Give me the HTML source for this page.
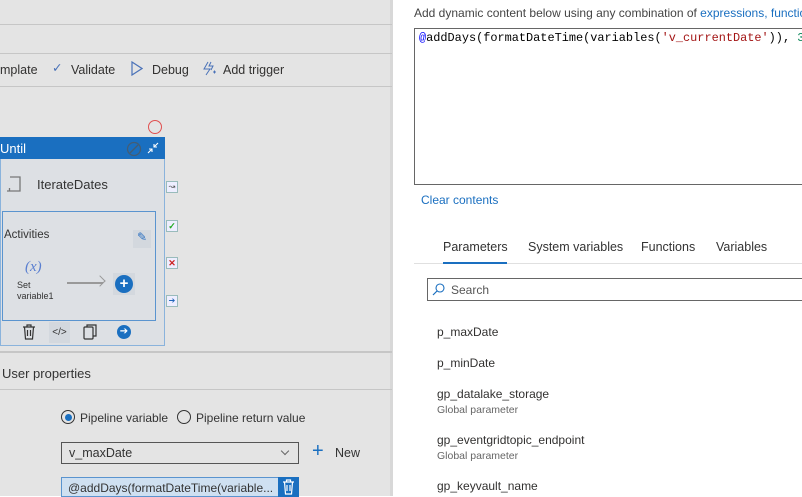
<!DOCTYPE html>
<html><head><style>
*{margin:0;padding:0;box-sizing:border-box}
body{width:802px;height:496px;overflow:hidden;background:#fff;font-family:"Liberation Sans",sans-serif;position:relative;color:#323130}
.a{position:absolute}
.l{background:#e4e4e4}
.hl{position:absolute;left:0;width:392px;height:1px;background:#c6c6c6}
.t{font-size:12.5px;white-space:nowrap}
</style></head><body>
<div class="a l" style="left:0;top:0;width:392px;height:496px"></div>
<div class="a" style="left:390px;top:0;width:3px;height:496px;background:#d8d8d8"></div>
<div class="hl" style="top:24px"></div>
<div class="hl" style="top:53px"></div>
<div class="hl" style="top:86px"></div>
<div class="a t" style="left:0;top:63px;color:#323130">mplate</div>
<div class="a t" style="left:52px;top:60px;color:#4a72b8">✓</div>
<div class="a t" style="left:71px;top:63px">Validate</div>
<svg class="a" style="left:131px;top:61px" width="12" height="15"><path d="M1 1 L11 7.5 L1 14 Z" fill="none" stroke="#4a72b8" stroke-width="1.2"/></svg>
<div class="a t" style="left:152px;top:63px">Debug</div>
<svg class="a" style="left:202px;top:61px" width="14" height="15"><path d="M6 1 L2 8 L8 8 L4 14 M9 1 L7 5 L11 5 L9 9 M11 11 h3 M12.5 9.5 v3" fill="none" stroke="#4a72b8" stroke-width="1"/></svg>
<div class="a t" style="left:223px;top:63px">Add trigger</div>

<div class="a" style="left:148px;top:120px;width:14px;height:14px;border:1.3px solid #e05050;border-radius:50%"></div>
<div class="a" style="left:0;top:137px;width:165px;height:209px;background:#dde0e4;border:1px solid #8ab3dc"></div>
<div class="a" style="left:0;top:137px;width:165px;height:22px;background:#1a6fc0"></div>
<div class="a" style="left:0;top:141px;font-size:13px;color:#fff">Until</div>
<svg class="a" style="left:126px;top:141px" width="16" height="16"><circle cx="8" cy="8" r="6.5" fill="none" stroke="#555" stroke-width="1.3" opacity=".7"/><path d="M4 12 L12 4" stroke="#555" stroke-width="1.3" opacity=".7"/></svg>
<svg class="a" style="left:146px;top:141px" width="14" height="14"><path d="M2 12 L6 8 M3 8 H6 V11 M12 2 L8 6 M8 3 V6 H11" fill="none" stroke="#fff" stroke-width="1.1"/></svg>
<svg class="a" style="left:6px;top:176px" width="16" height="17"><path d="M4 1 H14 V15 H5 M1 15 H6 M3.5 12 V15" fill="none" stroke="#777" stroke-width="1.3"/></svg>
<div class="a" style="left:37px;top:177px;font-size:13px;color:#333">IterateDates</div>
<div class="a" style="left:2px;top:211px;width:154px;height:110px;border:1px solid #5a94cf"></div>
<div class="a" style="left:4px;top:229px;font-size:11.5px;color:#333">Activities</div>
<div class="a" style="left:133px;top:230px;width:18px;height:18px;background:#d3d8de;color:#2a6fc0;font-size:12px;text-align:center">✎</div>
<div class="a" style="left:25px;top:259px;font-size:15px;color:#5a7fd0;font-family:'Liberation Serif',serif;font-style:italic">(x)</div>
<div class="a" style="left:17px;top:280px;font-size:9px;line-height:11px;color:#333">Set<br>variable1</div>
<div class="a" style="left:67px;top:282px;width:36px;height:1.5px;background:#999"></div>
<div class="a" style="left:96px;top:277px;width:8px;height:8px;border-top:1.5px solid #999;border-right:1.5px solid #999;transform:rotate(45deg)"></div>
<div class="a" style="left:113px;top:273px;width:22px;height:22px;background:#d3d8de"></div>
<div class="a" style="left:115px;top:275px;width:18px;height:18px;border-radius:50%;background:#1a6fc0;color:#fff;font-size:15px;line-height:17px;text-align:center;font-weight:bold">+</div>
<svg class="a" style="left:22px;top:324px" width="14" height="16"><path d="M1 3 H13 M5 3 V1 H9 V3 M2.5 3 L3.5 15 H10.5 L11.5 3 M5.5 6 V12 M8.5 6 V12" fill="none" stroke="#333" stroke-width="1.2"/></svg>
<div class="a" style="left:49px;top:322px;width:21px;height:21px;background:#d3d8de;font-size:10px;text-align:center;line-height:21px;color:#333">&lt;/&gt;</div>
<svg class="a" style="left:83px;top:324px" width="14" height="16"><rect x="1" y="3" width="9" height="12" rx="1" fill="none" stroke="#333" stroke-width="1.2"/><path d="M4 3 V1 H13 V12 H10" fill="none" stroke="#333" stroke-width="1.2"/></svg>
<div class="a" style="left:117px;top:325px;width:14px;height:14px;border-radius:50%;background:#1a6fc0;color:#fff;font-size:10px;text-align:center;line-height:14px">➔</div>
<div class="a" style="left:166px;top:181px;width:12px;height:12px;background:#eef;border:1px solid #9bb;font-size:8px;line-height:10px;text-align:center;color:#555">↝</div>
<div class="a" style="left:166px;top:220px;width:12px;height:12px;background:#eef;border:1px solid #9bb;font-size:9px;line-height:10px;text-align:center;color:#2a2;font-weight:bold">✓</div>
<div class="a" style="left:166px;top:257px;width:12px;height:12px;background:#eef;border:1px solid #9bb;font-size:9px;line-height:10px;text-align:center;color:#c22;font-weight:bold">✕</div>
<div class="a" style="left:166px;top:295px;width:12px;height:12px;background:#eef;border:1px solid #9bb;font-size:8px;line-height:10px;text-align:center;color:#26b">➔</div>

<div class="a" style="left:0;top:351px;width:392px;height:2px;background:#c6c6c6"></div>
<div class="a" style="left:2px;top:366px;font-size:13px;color:#333">User properties</div>
<div class="hl" style="top:389px"></div>
<div class="a" style="left:61px;top:410px;width:14px;height:14px;border:1.3px solid #333;border-radius:50%"></div>
<div class="a" style="left:64.5px;top:413.5px;width:7px;height:7px;background:#1a6fc0;border-radius:50%"></div>
<div class="a t" style="left:80px;top:411px;font-size:12px;color:#333">Pipeline variable</div>
<div class="a" style="left:177px;top:410px;width:14px;height:14px;border:1.3px solid #333;border-radius:50%"></div>
<div class="a t" style="left:196px;top:411px;font-size:12px;color:#333">Pipeline return value</div>
<div class="a" style="left:61px;top:442px;width:238px;height:22px;border:1px solid #555"></div>
<div class="a t" style="left:69px;top:446px;color:#333">v_maxDate</div>
<div class="a" style="left:282px;top:448px;width:6px;height:6px;border-right:1px solid #666;border-bottom:1px solid #666;transform:rotate(45deg)"></div>
<div class="a" style="left:312px;top:440px;font-size:20px;color:#1a6fc0;font-weight:200">+</div>
<div class="a t" style="left:335px;top:446px;color:#333">New</div>
<div class="a" style="left:61px;top:477px;width:238px;height:20px;background:#cfe0f1;border:1px solid #5a94cf"></div>
<div class="a t" style="left:68px;top:481px;font-size:12px;color:#333">@addDays(formatDateTime(variable...</div>
<div class="a" style="left:278px;top:477px;width:21px;height:20px;background:#1a6fc0"></div>
<svg class="a" style="left:282px;top:479px" width="13" height="16"><path d="M1 3 H12 M4.5 3 V1 H8.5 V3 M2.5 3 L3.5 15 H9.5 L10.5 3 M5 6 V12 M8 6 V12" fill="none" stroke="#fff" stroke-width="1.2"/></svg>

<div class="a t" style="left:414px;top:6px;font-size:12px;color:#444">Add dynamic content below using any combination of <span style="color:#1a6fc0">expressions, functions</span></div>
<div class="a" style="left:414px;top:28px;width:400px;height:157px;border:1px solid #666;background:#fff"></div>
<div class="a" style="left:419px;top:31px;font-family:'Liberation Mono',monospace;font-size:11.9px;white-space:nowrap"><span style="color:#00f">@</span><span style="color:#000">addDays(formatDateTime(variables(</span><span style="color:#a31515">'v_currentDate'</span><span style="color:#000">)), </span><span style="color:#098658">30</span></div>
<div class="a t" style="left:421px;top:193px;font-size:12px;color:#1a6fc0">Clear contents</div>
<div class="a t" style="left:443px;top:240px;color:#333">Parameters</div>
<div class="a t" style="left:528px;top:240px;color:#333">System variables</div>
<div class="a t" style="left:641px;top:240px;color:#333">Functions</div>
<div class="a t" style="left:716px;top:240px;color:#333">Variables</div>
<div class="a" style="left:414px;top:263px;width:388px;height:1px;background:#e0e0e0"></div>
<div class="a" style="left:443px;top:262px;width:64px;height:2px;background:#1a6fc0"></div>
<div class="a" style="left:427px;top:278px;width:380px;height:23px;border:1px solid #666"></div>
<svg class="a" style="left:432px;top:283px" width="13" height="13"><circle cx="8" cy="5" r="4" fill="none" stroke="#1a6fc0" stroke-width="1.1"/><path d="M5 8 L1 12" stroke="#1a6fc0" stroke-width="1.2"/></svg>
<div class="a t" style="left:451px;top:283px;font-size:12px;color:#555">Search</div>
<div class="a t" style="left:437px;top:325px;font-size:12px">p_maxDate</div>
<div class="a t" style="left:437px;top:356px;font-size:12px">p_minDate</div>
<div class="a t" style="left:437px;top:387px;font-size:12px">gp_datalake_storage</div>
<div class="a t" style="left:437px;top:404px;font-size:10.5px;color:#666">Global parameter</div>
<div class="a t" style="left:437px;top:433px;font-size:12px">gp_eventgridtopic_endpoint</div>
<div class="a t" style="left:437px;top:450px;font-size:10.5px;color:#666">Global parameter</div>
<div class="a t" style="left:437px;top:479px;font-size:12px">gp_keyvault_name</div>
</body></html>
